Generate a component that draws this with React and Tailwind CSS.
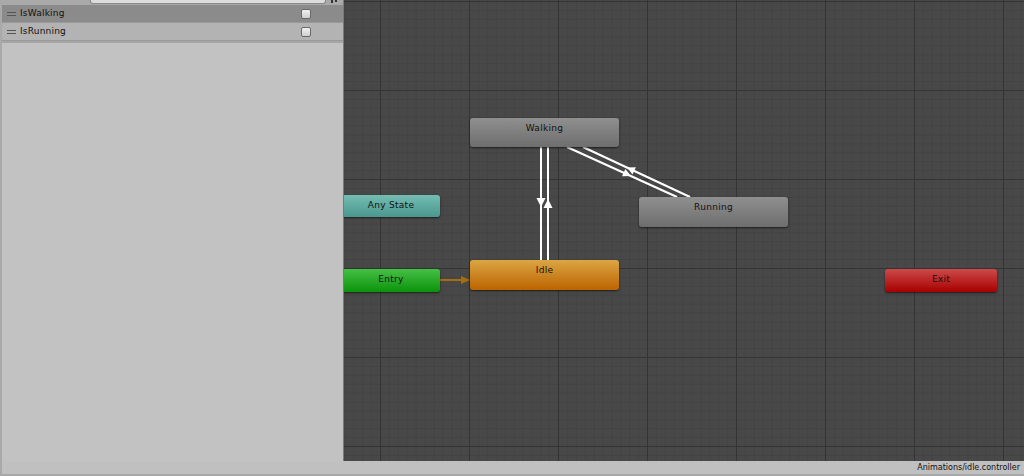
import React from 'react';

const params = [
  { name: 'IsWalking', selected: true },
  { name: 'IsRunning', selected: false },
];

const nodes = [
  { label: 'Walking', left: 126, top: 118, w: 149, h: 29, bg: 'bg-[linear-gradient(#8f8f8f,#6e6e6e)]' },
  { label: 'Running', left: 295, top: 197, w: 149, h: 30, bg: 'bg-[linear-gradient(#8f8f8f,#6e6e6e)]' },
  { label: 'Any State', left: -2, top: 195, w: 98, h: 22, bg: 'bg-[linear-gradient(#74bdb2,#4a978f)]' },
  { label: 'Entry', left: -2, top: 269, w: 98, h: 23, bg: 'bg-[linear-gradient(#45c045,#0b930b)]' },
  { label: 'Idle', left: 126, top: 260, w: 149, h: 30, bg: 'bg-[linear-gradient(#dca544,#bb6400)]' },
  { label: 'Exit', left: 541, top: 269, w: 112, h: 23, bg: 'bg-[linear-gradient(#cc4a4a,#a80000)]' },
];

const font = { fontFamily: '"DejaVu Sans", Verdana, sans-serif' };

function Handle() {
  return (
    <div className="flex flex-col gap-[2px] w-[9px]">
      <div className="h-px bg-[#555]" />
      <div className="h-px bg-[#555]" />
    </div>
  );
}

function ParamRow({ p }) {
  return (
    <div
      className={`flex items-center h-[18px] pl-[5px] pr-[32px] border-b border-[#999] ${
        p.selected ? 'bg-[#8b8b8b]' : 'bg-[#b3b3b3]'
      }`}
    >
      <Handle />
      <span className="ml-[4px] pt-[1px] text-[9px] tracking-[0.2px] text-[#111] flex-1">{p.name}</span>
      <div className="w-[10px] h-[10px] rounded-[2px] border border-[#6a6a6a] bg-[linear-gradient(#f0f0f0,#cfcfcf)]" />
    </div>
  );
}

function Edges() {
  return (
    <svg className="absolute inset-0 pointer-events-none" width="680" height="461">
      <defs>
        <pattern id="minor" width="8.9" height="8.9" patternUnits="userSpaceOnUse" x="36" y="1">
          <path d="M 0 0 L 0 8.9 M 0 0 L 8.9 0" stroke="#3e3e3e" strokeWidth="1" fill="none" />
        </pattern>
        <pattern id="major" width="89" height="89" patternUnits="userSpaceOnUse" x="36" y="1">
          <path d="M 0.5 0 L 0.5 89 M 0 0.5 L 89 0.5" stroke="#343434" strokeWidth="1" fill="none" />
        </pattern>
      </defs>
      <rect width="680" height="461" fill="#484848" />
      <rect width="680" height="461" fill="url(#minor)" />
      <rect width="680" height="461" fill="url(#major)" />

      {/* walking <-> idle */}
      <line x1="197" y1="147" x2="197" y2="260" stroke="#fff" strokeWidth="2" />
      <line x1="204" y1="147" x2="204" y2="260" stroke="#fff" strokeWidth="2" />
      <polygon points="192.5,198 201.5,198 197,207" fill="#fff" />
      <polygon points="199.5,208 208.5,208 204,199" fill="#fff" />

      {/* walking <-> running */}
      <line x1="223" y1="147" x2="333" y2="197" stroke="#fff" strokeWidth="2" />
      <line x1="239" y1="147" x2="346" y2="197" stroke="#fff" strokeWidth="2" />
      <polygon points="287,176 278,176.3 281.4,169.1" fill="#fff" />
      <polygon points="283,167.5 288.5,174.5 291.9,167.3" fill="#fff" />

      {/* entry -> idle */}
      <line x1="96" y1="280" x2="120" y2="280" stroke="#a56d0c" strokeWidth="2" />
      <polygon points="117,276 126,280 117,284" fill="#a56d0c" />
    </svg>
  );
}

export default function App() {
  return (
    <div className="flex flex-col w-[1024px] h-[476px] overflow-hidden bg-[#c2c2c2]" style={font}>
      <div className="flex flex-1 min-h-0">
        <div className="w-[344px] shrink-0 flex flex-col bg-[#c2c2c2] border-l-2 border-[#a9a9a9] border-r border-r-[#7a7a7a]">
          <div className="h-[5px] flex bg-[#a9a9a9]">
            <div className="ml-[88px] w-[236px] h-[4px] rounded-b-[3px] border border-t-0 border-[#8a8a8a] bg-[#dcdcdc]" />
            <div className="ml-auto mr-[6px] flex items-start gap-[2px]">
              <div className="w-[2px] h-[3px] bg-[#333]" />
              <div className="w-[2px] h-[2px] bg-[#333]" />
            </div>
          </div>
          {params.map((p) => (
            <ParamRow key={p.name} p={p} />
          ))}
          <div className="h-[2px] bg-[#a5a5a5]" />
          <div className="flex-1" />
        </div>
        <div className="relative flex-1 overflow-hidden">
          <Edges />
          {nodes.map((n) => (
            <div
              key={n.label}
              className={`absolute flex justify-center pt-[4px] leading-[12px] rounded-[3px] shadow-[0_1px_2px_rgba(0,0,0,0.6)] text-[9px] tracking-[0.3px] text-[#111] ${n.bg}`}
              style={{ left: n.left, top: n.top, width: n.w, height: n.h }}
            >
              {n.label}
            </div>
          ))}
        </div>
      </div>
      <div className="h-[15px] flex items-center justify-end pr-[4px] bg-[#c0c0c0] border-b-2 border-[#a9a9a9] border-l-2 border-l-[#a9a9a9]">
        <span className="text-[8px] text-[#111]">Animations/idle.controller</span>
      </div>
    </div>
  );
}
